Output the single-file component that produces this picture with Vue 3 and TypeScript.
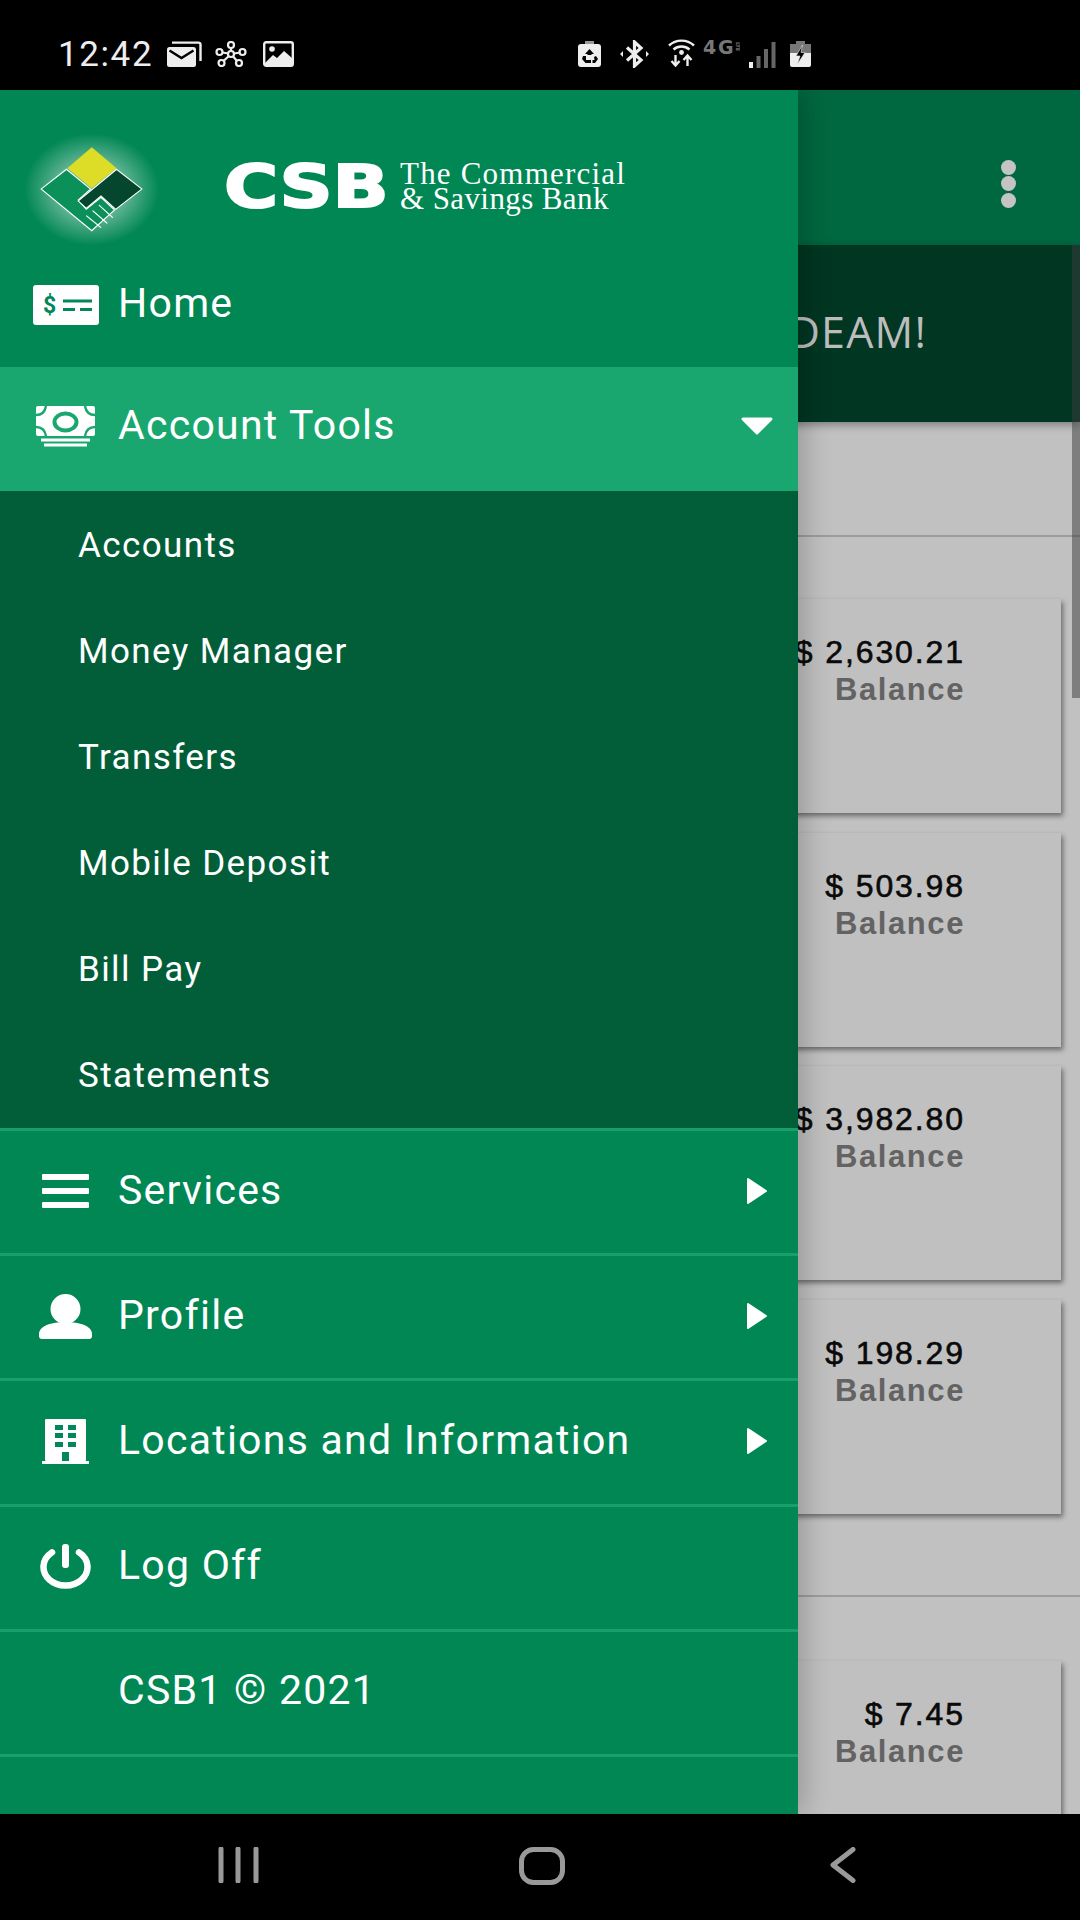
<script setup lang="ts">
interface MenuRow {
  label: string
  icon: string
  arrow?: boolean
}

const subItems: string[] = ['Accounts', 'Money Manager', 'Transfers', 'Mobile Deposit', 'Bill Pay', 'Statements']

const rows: MenuRow[] = [
  { label: 'Services', icon: 'menu', arrow: true },
  { label: 'Profile', icon: 'person', arrow: true },
  { label: 'Locations and Information', icon: 'building', arrow: true },
  { label: 'Log Off', icon: 'power' },
  { label: 'CSB1 © 2021', icon: '' }
]

const firstGroup: string[] = ['$ 2,630.21', '$ 503.98', '$ 3,982.80', '$ 198.29']
</script>

<template>
  <div class="screen">
    <div class="status">
      <span class="time">12:42</span>
      <svg class="st-mail" width="35" height="26" viewBox="0 0 35 26">
        <path d="M5 1.600H31.500a2 2 0 0 1 2 2V20" fill="none" stroke="#eee" stroke-width="2.400" />
        <rect x="0" y="6" width="29" height="20" rx="2.500" fill="#eee" />
        <path d="M2.500 9.500L14.500 17L26.500 9.500" fill="none" stroke="#000" stroke-width="2.400" />
      </svg>
      <svg class="st-flower" width="32" height="26" viewBox="0 0 32 26">
        <g fill="none" stroke="#eee" stroke-width="2.200">
          <path d="M16 13L16 6M16 13L7.500 11.500M16 13L25.500 11.500M16 13L8.500 20M16 13L22 20" />
          <circle cx="16" cy="4" r="3" />
          <circle cx="4.500" cy="11" r="3" />
          <circle cx="27.500" cy="11" r="3" />
          <circle cx="6.500" cy="22" r="3" />
          <circle cx="24" cy="22" r="3" />
          <circle cx="16" cy="13" r="3" fill="#000" />
        </g>
      </svg>
      <svg class="st-image" width="31" height="26" viewBox="0 0 31 26">
        <rect x="1.200" y="1.200" width="28.600" height="23.600" rx="2" fill="#000" stroke="#eee" stroke-width="2.400" />
        <circle cx="9" cy="8" r="2.800" fill="#eee" />
        <path d="M2 22L10 14L14 17L21 10L29 17V25H2Z" fill="#eee" />
      </svg>

      <svg class="st-recycle" width="23" height="26" viewBox="0 0 23 26">
        <rect x="7" y="0" width="9" height="4" fill="#999" />
        <rect x="0" y="3" width="23" height="23" rx="3" fill="#eee" />
        <path d="M11.500 8L16 13H13.500V14H9.500V13H7ZM5 15L8 15V19H13V22H7.500L4 18ZM18 15L20 18L17 22H14.500V19H16.500L16 16Z" fill="#000" />
      </svg>
      <svg class="st-bt" width="29" height="28" viewBox="0 0 29 28">
        <path d="M7 7.500L21 20L14.500 26V2L21 8L7 20.500" fill="none" stroke="#eee" stroke-width="3.200" />
        <path d="M0 14l3-3v6zM29 14l-3-3v6z" fill="#eee" />
      </svg>
      <svg class="st-wifi" width="27" height="29" viewBox="0 0 27 29">
        <g fill="none" stroke="#eee" stroke-width="2.400">
          <path d="M1 7.500C8 1 19 1 26 7.500" />
          <path d="M5.500 11.500C10 7.500 17 7.500 21.500 11.500" />
        </g>
        <circle cx="13.500" cy="14.500" r="2.400" fill="#eee" />
        <path d="M7.500 17V27M3.500 23L7.500 27.500L11.500 23M19.500 28V18M15.500 22L19.500 17.500L23.500 22" fill="none" stroke="#eee" stroke-width="2.400" />
      </svg>
      <span class="st-net">4G<small>LTE</small></span>
      <svg class="st-signal" width="27" height="26" viewBox="0 0 27 26">
        <rect x="0" y="20" width="4" height="6" fill="#eee" />
        <rect x="7.500" y="14" width="4" height="12" fill="#666" />
        <rect x="15" y="7" width="4" height="19" fill="#666" />
        <rect x="22.500" y="0" width="4" height="26" fill="#666" />
      </svg>
      <svg class="st-charge" width="21" height="26" viewBox="0 0 21 26">
        <path d="M6 0H15V3H21V12H0V3H6Z" fill="#777" />
        <path d="M0 12H21V24a2 2 0 0 1-2 2H2a2 2 0 0 1-2-2Z" fill="#eee" />
        <path d="M12.500 4L6 15H10L7.500 23L15 11.500H11Z" fill="#000" stroke="#eee" stroke-width="0.600" />
      </svg>
    </div>

    <div class="middle">
      <div class="page">
        <div class="appbar">
          <span class="dot"></span>
          <span class="dot"></span>
          <span class="dot"></span>
        </div>
        <div class="banner">DEAM!</div>
        <div class="group-head"></div>
        <div class="cards">
          <div v-for="amount in firstGroup" :key="amount" class="card">
            <div class="amount">{{ amount }}</div>
            <div class="balance">Balance</div>
          </div>
        </div>
        <div class="cards second">
          <div class="card">
            <div class="amount">$ 7.45</div>
            <div class="balance">Balance</div>
          </div>
        </div>
      </div>
      <div class="scrollbar"></div>

      <aside class="drawer">
        <div class="logo">
          <svg class="mark" width="170" height="122" viewBox="0 0 404 366" preserveAspectRatio="none">
            <defs>
              <radialGradient id="glow">
                <stop offset="0.45" stop-color="#fff" stop-opacity="0.42" />
                <stop offset="1" stop-color="#fff" stop-opacity="0" />
              </radialGradient>
            </defs>
            <ellipse cx="218" cy="208" rx="160" ry="168" fill="url(#glow)" />
            <polygon points="158,148 215,207 186,240 205,268 240,232 272,270 218,332 98,207" fill="#0a9058" stroke="#fff" stroke-width="3" />
            <polygon points="218,82 277,145 218,205 160,145" fill="#dddd28" />
            <polygon points="277,148 337,207 275,268 240,228 205,265 186,243" fill="#04472e" stroke="#fff" stroke-width="3" />
            <path d="M205 287L240 323M220 272L255 310M235 255L268 293" stroke="#fff" stroke-width="3" fill="none" />
          </svg>
          <div class="word"><span>CSB</span></div>
          <div class="bank">
            <div class="bank-top">The Commercial</div>
            <div class="bank-bottom">&amp; Savings Bank</div>
          </div>
        </div>

        <div class="row home">
          <span class="slot">
            <svg width="66" height="40" viewBox="0 0 66 40">
              <rect width="66" height="40" rx="3" fill="#fff" />
              <text x="10" y="28" font-family="Roboto" font-weight="700" font-size="23" fill="#01875a">$</text>
              <path d="M30 16H59M30 24.500H42M47 24.500H59" stroke="#01875a" stroke-width="3" />
            </svg>
          </span>
          <span class="label">Home</span>
        </div>

        <div class="row active">
          <span class="slot">
            <svg width="59" height="41" viewBox="0 0 59 41">
              <rect x="0" y="0" width="59" height="30" rx="2" fill="#fff" />
              <g fill="none" stroke="#19a76f" stroke-width="2.400">
                <path d="M0 9C5 9 9 6 10 0M0 21C5 21 9 24 10 30M59 9C54 9 50 6 49 0M59 21C54 21 50 24 49 30" />
                <ellipse cx="29.500" cy="16" rx="11" ry="8.500" stroke-width="4" />
              </g>
              <rect x="5" y="32.500" width="49" height="3" fill="#fff" />
              <rect x="8" y="37.500" width="43" height="3" fill="#fff" />
            </svg>
          </span>
          <span class="label">Account Tools</span>
          <span class="arrow">
            <svg width="34" height="18" viewBox="0 0 34 18"><path d="M3 2H31L17 16Z" fill="#fff" stroke="#fff" stroke-width="3" stroke-linejoin="round" /></svg>
          </span>
        </div>

        <div class="sub">
          <div v-for="item in subItems" :key="item" class="sub-item">{{ item }}</div>
        </div>

        <div v-for="row in rows" :key="row.label" class="row line">
          <span class="slot">
            <svg v-if="row.icon === 'menu'" width="47" height="34" viewBox="0 0 47 34">
              <rect y="0" width="47" height="6" rx="1" fill="#fff" />
              <rect y="14" width="47" height="6" rx="1" fill="#fff" />
              <rect y="28" width="47" height="6" rx="1" fill="#fff" />
            </svg>
            <svg v-else-if="row.icon === 'person'" width="53" height="45" viewBox="0 0 53 45">
              <circle cx="26.500" cy="15" r="15" fill="#fff" />
              <path d="M0 40C0 32 12 28 26.500 28C41 28 53 32 53 40V42a3 3 0 0 1-3 3H3a3 3 0 0 1-3-3Z" fill="#fff" />
            </svg>
            <svg v-else-if="row.icon === 'building'" width="47" height="45" viewBox="0 0 47 45">
              <rect x="3" y="0" width="41" height="42" rx="1" fill="#fff" />
              <rect x="0" y="42" width="47" height="3" fill="#fff" />
              <g fill="#01875a">
                <rect x="13" y="6" width="8" height="5" />
                <rect x="26" y="6" width="8" height="5" />
                <rect x="13" y="14" width="8" height="5" />
                <rect x="26" y="14" width="8" height="5" />
                <rect x="13" y="23" width="8" height="5" />
                <rect x="26" y="23" width="8" height="5" />
                <rect x="20" y="33" width="7" height="9" />
              </g>
            </svg>
            <svg v-else-if="row.icon === 'power'" width="51" height="45" viewBox="0 0 51 45">
              <path d="M12 8.400A22 18.500 0 1 0 39 8.400" fill="none" stroke="#fff" stroke-width="6.500" stroke-linecap="round" />
              <rect x="22" y="0" width="7" height="24" rx="3" fill="#fff" />
            </svg>
          </span>
          <span class="label">{{ row.label }}</span>
          <span v-if="row.arrow" class="arrow">
            <svg width="22" height="28" viewBox="0 0 22 28"><path d="M2 2V26L20 14Z" fill="#fff" stroke="#fff" stroke-width="2" stroke-linejoin="round" /></svg>
          </span>
        </div>
      </aside>
    </div>

    <div class="nav">
      <svg class="nav-recent" width="42" height="36" viewBox="0 0 42 36">
        <path d="M3 2V34M20 2V34M38 2V34" stroke="#999" stroke-width="5" stroke-linecap="round" />
      </svg>
      <svg class="nav-home" width="46" height="38" viewBox="0 0 46 38">
        <rect x="2.500" y="2.500" width="41" height="33" rx="12" fill="none" stroke="#999" stroke-width="5" />
      </svg>
      <svg class="nav-back" width="26" height="36" viewBox="0 0 26 36">
        <path d="M23 2.500L3 18L23 33.500" fill="none" stroke="#999" stroke-width="5" stroke-linecap="round" stroke-linejoin="round" />
      </svg>
    </div>
  </div>
</template>

<style scoped>
.screen {
  width: 1080px;
  height: 1920px;
  display: flex;
  flex-direction: column;
  overflow: hidden;
  background: #000;
  font-family: Roboto, "Liberation Sans", sans-serif;
}

.status {
  height: 90px;
  flex: none;
  display: flex;
  align-items: flex-start;
  padding-left: 58px;
  box-sizing: border-box;
  color: #eee;
}
.time {
  width: 94px;
  flex: none;
  font-size: 35px;
  line-height: 30px;
  margin-top: 40px;
  letter-spacing: 1.600px;
  white-space: nowrap;
}
.status svg {
  margin-top: 41px;
  flex: none;
}
.status .st-mail { margin-left: 15px; }
.status .st-flower { margin-left: 13px; }
.status .st-image { margin-left: 16px; }
.status .st-recycle { margin-left: 284px; }
.status .st-bt { margin-left: 19px; margin-top: 40px; }
.status .st-wifi { margin-left: 19px; margin-top: 38px; }
.st-net {
  margin: 38px 0 0 8px;
  width: 39px;
  font-size: 19px;
  line-height: 18px;
  font-weight: 700;
  letter-spacing: 1.800px;
  color: #777;
  font-family: "DejaVu Sans", sans-serif;
  display: flex;
  align-items: flex-start;
  white-space: nowrap;
}
.st-net small {
  font-size: 5px;
  line-height: 6px;
  letter-spacing: 0;
  margin-top: 4px;
  writing-mode: vertical-rl;
}
.status .st-signal { margin-left: 7px; margin-top: 42px; }
.status .st-charge { margin-left: 14px; }

.middle {
  flex: 1;
  position: relative;
  overflow: hidden;
  background: #c1c1c1;
}

.appbar {
  height: 155px;
  background: #006840;
  display: flex;
  flex-direction: column;
  align-items: flex-end;
  justify-content: center;
  gap: 1.500px;
  padding: 32px 64px 0 0;
  box-sizing: border-box;
}
.dot {
  width: 15px;
  height: 15px;
  border-radius: 50%;
  background: #c4c4c4;
}
.banner {
  height: 177px;
  background: #003622;
  color: #bdbdbd;
  font-family: "Open Sans", sans-serif;
  font-size: 43px;
  letter-spacing: 1.200px;
  text-align: right;
  line-height: 174px;
  padding-right: 153px;
  box-shadow: 0 3px 8px rgba(0, 0, 0, 0.35);
  position: relative;
}
.group-head {
  height: 115px;
  border-bottom: 2px solid #9d9d9d;
  box-sizing: border-box;
}
.cards {
  padding: 62px 19px 81px 0;
  display: flex;
  flex-direction: column;
  gap: 19.500px;
}
.cards.second {
  border-top: 2px solid #9d9d9d;
  padding-top: 64px;
}
.card {
  height: 214px;
  background: #c0c0c0;
  box-shadow: 2px 3px 5px rgba(0, 0, 0, 0.45);
  padding: 36px 96px 0 0;
  box-sizing: border-box;
  text-align: right;
  font-family: "Liberation Sans", Arial, sans-serif;
}
.amount {
  color: #0a0a0a;
  font-size: 32px;
  line-height: 35px;
  letter-spacing: 1.900px;
  -webkit-text-stroke: 0.6px #0a0a0a;
}
.balance {
  color: #636363;
  font-weight: 700;
  font-size: 31px;
  line-height: 39px;
  letter-spacing: 1.600px;
}
.scrollbar {
  position: absolute;
  top: 155px;
  right: 0;
  width: 8px;
  height: 453px;
  background: rgba(60, 60, 60, 0.5);
}

.drawer {
  position: absolute;
  left: 0;
  top: 0;
  bottom: 0;
  width: 798px;
  background: #018754;
  box-shadow: 6px 0 26px rgba(0, 0, 0, 0.22);
  color: #fff;
  display: flex;
  flex-direction: column;
}
.logo {
  height: 152px;
  flex: none;
  display: flex;
  align-items: flex-start;
}
.mark {
  margin-top: 30px;
  overflow: visible;
  flex: none;
}
.word {
  width: 162px;
  height: 43px;
  margin: 75px 0 0 54px;
  flex: none;
  font-family: "DejaVu Sans", sans-serif;
  font-weight: 700;
  font-size: 59px;
  line-height: 43px;
  -webkit-text-stroke: 2px #fff;
}
.word span {
  display: inline-block;
  transform: scaleX(1.25);
  transform-origin: left center;
}
.bank {
  margin: 71px 0 0 14px;
  font-family: "Liberation Serif", serif;
  font-size: 31px;
  line-height: 25px;
  white-space: nowrap;
}
.bank-top {
  letter-spacing: 1.200px;
}
.bank-bottom {
  letter-spacing: 0.400px;
}
.row {
  display: flex;
  align-items: center;
  height: 125.200px;
  padding-bottom: 2px;
  box-sizing: border-box;
  flex: none;
}
.home {
  height: 125px;
  padding-bottom: 0;
}
.active {
  height: 124px;
  padding-bottom: 6px;
  background: #19a76f;
}
.line {
  border-bottom: 3px solid #18a06a;
}
.sub + .line {
  height: 128.200px;
  border-top: 3px solid #18a06a;
}
.slot {
  width: 95px;
  margin: 0 5px 0 18px;
  display: flex;
  justify-content: center;
  flex: none;
}
.label {
  font-size: 41px;
  line-height: 48px;
  margin-top: -3px;
  letter-spacing: 1.250px;
  white-space: nowrap;
}
.arrow {
  margin-left: auto;
  width: 40px;
  margin-right: 21px;
  display: flex;
  justify-content: center;
}
.sub {
  height: 637px;
  background: #025e39;
  flex: none;
}
.sub-item {
  height: 106px;
  padding-left: 78px;
  line-height: 109px;
  font-size: 35px;
  letter-spacing: 1.400px;
}

.nav {
  height: 106px;
  flex: none;
  display: flex;
  align-items: flex-start;
  padding-left: 218px;
  box-sizing: border-box;
}
.nav svg {
  margin-top: 33px;
  flex: none;
}
.nav-home { margin-left: 259px; }
.nav-back { margin-left: 265px; }
</style>

<style>
html,
body {
  margin: 0;
  background: #000;
}
</style>
